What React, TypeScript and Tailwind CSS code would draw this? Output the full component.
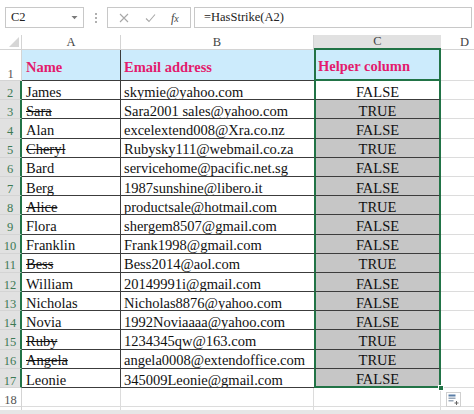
import React from "react";

type Row = { n: number; name: string; email: string; helper: string; strike?: boolean };

const rows: Row[] = [
  { n: 2, name: "James", email: "skymie@yahoo.com", helper: "FALSE" },
  { n: 3, name: "Sara", email: "Sara2001 sales@yahoo.com", helper: "TRUE", strike: true },
  { n: 4, name: "Alan", email: "excelextend008@Xra.co.nz", helper: "FALSE" },
  { n: 5, name: "Cheryl", email: "Rubysky111@webmail.co.za", helper: "TRUE", strike: true },
  { n: 6, name: "Bard", email: "servicehome@pacific.net.sg", helper: "FALSE" },
  { n: 7, name: "Berg", email: "1987sunshine@libero.it", helper: "FALSE" },
  { n: 8, name: "Alice", email: "productsale@hotmail.com", helper: "TRUE", strike: true },
  { n: 9, name: "Flora", email: "shergem8507@gmail.com", helper: "FALSE" },
  { n: 10, name: "Franklin", email: "Frank1998@gmail.com", helper: "FALSE" },
  { n: 11, name: "Bess", email: "Bess2014@aol.com", helper: "TRUE", strike: true },
  { n: 12, name: "William", email: "20149991i@gmail.com", helper: "FALSE" },
  { n: 13, name: "Nicholas", email: "Nicholas8876@yahoo.com", helper: "FALSE" },
  { n: 14, name: "Novia", email: "1992Noviaaaa@yahoo.com", helper: "FALSE" },
  { n: 15, name: "Ruby", email: "1234345qw@163.com", helper: "TRUE", strike: true },
  { n: 16, name: "Angela", email: "angela0008@extendoffice.com", helper: "TRUE", strike: true },
  { n: 17, name: "Leonie", email: "345009Leonie@gmail.com", helper: "FALSE" },
];

const grid = "grid grid-cols-[22px_99px_193px_127px_1fr]";

function FormulaBar() {
  return (
    <div className="flex h-[35px] items-start pt-[7px] pl-[5px] text-[12.5px] text-[#222]">
      <div className="flex h-[21px] w-[79px] items-center justify-between border border-[#c8c8c8] pl-[5px] pr-[5px]">
        <span>C2</span>
        <svg width="7" height="5" viewBox="0 0 7 5">
          <path d="M0.5 1 L6.5 1 L3.5 4.2 Z" fill="#7a7a7a" />
        </svg>
      </div>
      <div className="flex h-[21px] w-[23px] flex-col items-center justify-center gap-[2px]">
        <span className="h-[2px] w-[2px] bg-[#b0b0b0]" />
        <span className="h-[2px] w-[2px] bg-[#b0b0b0]" />
        <span className="h-[2px] w-[2px] bg-[#b0b0b0]" />
      </div>
      <div className="flex h-[21px] w-[84px] items-center border border-[#c8c8c8] pl-[11px]">
        <svg width="10" height="10" viewBox="0 0 10 10">
          <path d="M1 1 L9 9 M9 1 L1 9" stroke="#a8a8a8" strokeWidth="1.1" />
        </svg>
        <svg className="ml-[16px]" width="11" height="10" viewBox="0 0 11 10">
          <path d="M1 5.5 L4 8.5 L10 1.5" stroke="#a8a8a8" strokeWidth="1.1" fill="none" />
        </svg>
        <span className="ml-[15px] italic text-[12px] text-[#444]">
          f<span className="text-[10px]">x</span>
        </span>
      </div>
      <div className="ml-[3px] flex h-[21px] w-[278px] items-center border border-[#c8c8c8] pl-[9px]">
        =HasStrike(A2)
      </div>
    </div>
  );
}

function ColumnHeaders() {
  return (
    <div className={`${grid} h-[15px] text-[12.5px] leading-none text-[#444]`}>
      <div className="flex items-end justify-end border-r border-b border-[#d4d4d4] pr-[2px] pb-[2px]">
        <svg width="10" height="10" viewBox="0 0 10 10">
          <path d="M10 0 L10 10 L0 10 Z" fill="#d6d6d6" />
        </svg>
      </div>
      <div className="flex items-center justify-center border-r border-b border-[#d4d4d4]">A</div>
      <div className="flex items-center justify-center border-r border-b border-[#d4d4d4]">B</div>
      <div className="flex items-center justify-center border-b-2 border-[#217346] bg-[#e1e1e1]">C</div>
      <div className="flex items-center justify-center border-b border-[#d4d4d4] pl-[14px]">D</div>
    </div>
  );
}

function RowNum({ n, selected, h }: { n: number; selected?: boolean; h: string }) {
  return (
    <div
      className={`flex items-end justify-center border-b border-[#d4d4d4] pb-0 text-[12.5px] ${h} ${
        selected ? "border-r-2 border-r-[#217346] bg-[#e1e1e1] text-[#3d7a55]" : "border-r border-r-[#d4d4d4] text-[#555]"
      }`}
    >
      {n}
    </div>
  );
}

export default function App() {
  return (
    <div
      className="relative h-[414px] w-[474px] overflow-hidden bg-white text-[#111]"
      style={{ fontFamily: '"Liberation Serif", "Times New Roman", serif' }}
    >
      <FormulaBar />
      <ColumnHeaders />

      <div className={`${grid} text-[14.5px] leading-none`}>
        <RowNum n={1} h="h-[31px]" />
        <div className="flex h-[31px] items-end border-r border-b border-[#3c3c3c] bg-[#ccebfc] pb-[6px] pl-[4px] font-bold text-[#e31b6d]">
          Name
        </div>
        <div className="flex h-[31px] items-end border-b border-[#3c3c3c] bg-[#ccebfc] pb-[6px] pl-[3px] font-bold text-[#e31b6d]">
          Email address
        </div>
        <div className="flex h-[31px] items-end border-x-2 border-b-2 border-[#217346] bg-[#ccebfc] pb-[6px] pl-[2px] font-bold text-[#e31b6d]">
          Helper column
        </div>
        <div className="h-[31px] border-b border-[#dcdcdc]" />

        {rows.map((r, i) => {
          const last = i === rows.length - 1;
          return (
            <React.Fragment key={r.n}>
              <RowNum n={r.n} selected h="h-[19.2px]" />
              <div className="flex h-[19.2px] items-end border-r border-b border-[#3c3c3c] pb-0 pl-[4px]">
                <span className={r.strike ? "line-through" : ""}>{r.name}</span>
              </div>
              <div className="flex h-[19.2px] items-end overflow-hidden whitespace-nowrap border-b border-[#3c3c3c] pb-0 pl-[3px]">
                {r.email}
              </div>
              <div
                className={`flex h-[19.2px] items-end justify-center border-x-2 border-x-[#217346] pb-0 ${
                  last ? "border-b-2 border-b-[#217346]" : "border-b border-b-[#3c3c3c]"
                } ${i === 0 ? "bg-white" : "bg-[#c6c6c6]"}`}
              >
                {r.helper}
              </div>
              <div className="h-[19.2px] border-b border-[#dcdcdc]" />
            </React.Fragment>
          );
        })}

        {[18, 19].map((n) => (
          <React.Fragment key={n}>
            <RowNum n={n} h="h-[19.2px]" />
            <div className="h-[19.2px] border-r border-b border-[#dcdcdc]" />
            <div className="h-[19.2px] border-r border-b border-[#dcdcdc]" />
            <div className="h-[19.2px] border-r border-b border-[#dcdcdc]" />
            <div className="h-[19.2px] border-b border-[#dcdcdc]" />
          </React.Fragment>
        ))}
      </div>

      <div className="absolute bottom-0 left-0 h-[4px] w-full bg-[#e6e6e6]" />

      {/* fill handle */}
      <div className="absolute left-[438px] top-[385px] h-[6px] w-[6px] border border-white bg-[#217346]" />

      {/* quick analysis button */}
      <div className="absolute left-[446px] top-[392px] flex h-[15px] w-[15px] items-center justify-center border border-[#d0d0d0] bg-white">
        <svg width="11" height="11" viewBox="0 0 11 11">
          <rect x="0.5" y="0.5" width="7" height="2" fill="#5b7fa8" />
          <rect x="0.5" y="3.5" width="7" height="1.5" fill="#9aa8b8" />
          <rect x="0.5" y="6" width="5" height="1.5" fill="#9aa8b8" />
          <path d="M8.5 7 V11 M6.5 9 H10.5" stroke="#666" strokeWidth="1" />
        </svg>
      </div>
    </div>
  );
}
